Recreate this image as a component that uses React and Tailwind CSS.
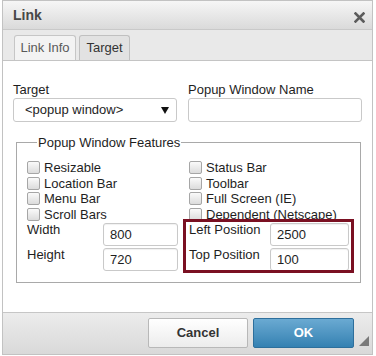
import React from "react";

function Checkbox({ label }) {
  return (
    <div className="flex items-center h-[15.5px]">
      <span className="w-[13px] h-[13px] border border-[#a6a6a6] rounded-[2px] bg-gradient-to-b from-[#fafafa] to-[#dcdcdc]" />
      <span className="ml-[4px] leading-[15px]">{label}</span>
    </div>
  );
}

function Field({ label, value, width, rowWidth, gap }) {
  return (
    <div className={`flex items-start justify-between ${rowWidth} ${gap}`}>
      <span className="leading-[14px]">{label}</span>
      <div
        className={`${width} h-[23px] border border-[#c9c9c9] rounded-[3px] bg-white pl-[6px] leading-[21px] shadow-[inset_0_1px_1px_rgba(0,0,0,0.06)]`}
      >
        {value}
      </div>
    </div>
  );
}

export default function App() {
  return (
    <div className="w-[376px] h-[356px] bg-white font-['Liberation_Sans',Arial,sans-serif] text-[13px] text-[#1e1e1e]">
      <div className="relative ml-[2px] w-[371px] h-[355px] border border-[#c2c2c2] flex flex-col bg-white">
        {/* title */}
        <div className="h-[29px] border-b border-[#c9c9c9] bg-gradient-to-b from-[#f6f6f6] to-[#dadada] flex items-center justify-between pl-[10px] pr-[7px]">
          <span className="font-bold text-[14px] text-[#474747]">Link</span>
          <svg width="11" height="11" viewBox="0 0 11 11" className="mt-[4px]">
            <path d="M1.5 1.5 L9.5 9.5 M9.5 1.5 L1.5 9.5" stroke="#5c5c5c" strokeWidth="2.6" strokeLinecap="square" />
          </svg>
        </div>

        {/* tabs */}
        <div className="h-[31px] border-b border-[#c4c4c4] bg-[#e9e9e9] flex items-end pl-[11px] gap-[3px]">
          <div className="w-[62px] h-[25px] border border-b-0 border-[#c6c6c6] rounded-t-[3px] bg-[#f3f3f3] flex items-center justify-center text-[#595959]">
            Link Info
          </div>
          <div className="w-[51px] h-[25px] border border-b-0 border-[#c0c0c0] rounded-t-[3px] bg-[#e2e2e2] flex items-center justify-center text-[#333]">
            Target
          </div>
        </div>

        {/* content */}
        <div className="h-[251px] pl-[10px] pt-[21px]">
          <div className="grid grid-cols-[164px_174px] gap-x-[11px]">
            <div>
              <div className="h-[15px] leading-[15px]">Target</div>
              <div className="mt-[1px] h-[24px] border border-[#c9c9c9] rounded-[3px] bg-white flex items-center justify-between pl-[11px] pr-[7px]">
                <span>&lt;popup window&gt;</span>
                <svg width="8" height="7" viewBox="0 0 8 7">
                  <polygon points="0,0 8,0 4,7" fill="#111" />
                </svg>
              </div>
            </div>
            <div>
              <div className="h-[15px] leading-[15px]">Popup Window Name</div>
              <div className="mt-[1px] h-[24px] border border-[#c9c9c9] rounded-[3px] bg-white" />
            </div>
          </div>

          <fieldset className="ml-[3px] mt-[13px] w-[345px] border border-[#a9a9a9] pl-[10px] pb-[11px]">
            <legend className="ml-[10px] px-[1px] leading-[15px]">Popup Window Features</legend>
            <div className="flex pt-[10px]">
              <div className="w-[162px]">
                <Checkbox label="Resizable" />
                <Checkbox label="Location Bar" />
                <Checkbox label="Menu Bar" />
                <Checkbox label="Scroll Bars" />
                <div className="pt-[1px]">
                  <Field label="Width" value="800" width="w-[75px]" rowWidth="w-[151px]" gap="" />
                  <Field label="Height" value="720" width="w-[75px]" rowWidth="w-[151px]" gap="mt-[2px]" />
                </div>
              </div>
              <div>
                <Checkbox label="Status Bar" />
                <Checkbox label="Toolbar" />
                <Checkbox label="Full Screen (IE)" />
                <Checkbox label="Dependent (Netscape)" />
                <div className="pt-[1px]">
                  <Field label="Left Position" value="2500" width="w-[79px]" rowWidth="w-[160px]" gap="" />
                  <Field label="Top Position" value="100" width="w-[79px]" rowWidth="w-[160px]" gap="mt-[2px]" />
                </div>
              </div>
            </div>
          </fieldset>
        </div>

        {/* footer */}
        <div className="relative flex-1 border-t border-[#c6c6c6] bg-gradient-to-b from-[#ececec] to-[#d9d9d9] flex justify-end items-start pt-[5px] pr-[18px] gap-[5px]">
          <button className="w-[100px] h-[30px] border border-[#b8b8b8] rounded-[2px] bg-gradient-to-b from-white to-[#ececec] font-bold text-[#333]">
            Cancel
          </button>
          <button className="w-[101px] h-[30px] border border-[#2d6f9c] rounded-[2px] bg-gradient-to-b from-[#6aaad2] to-[#3481b2] font-bold text-white">
            OK
          </button>
          <svg width="10" height="10" viewBox="0 0 10 10" className="absolute right-[3px] bottom-[8px]">
            <polygon points="10,0 10,10 0,10" fill="#7a7a7a" />
          </svg>
        </div>

        {/* highlight */}
        <div className="absolute left-[180px] top-[218px] w-[171px] h-[54px] border-[3px] border-[#7a1022]" />
      </div>
    </div>
  );
}
